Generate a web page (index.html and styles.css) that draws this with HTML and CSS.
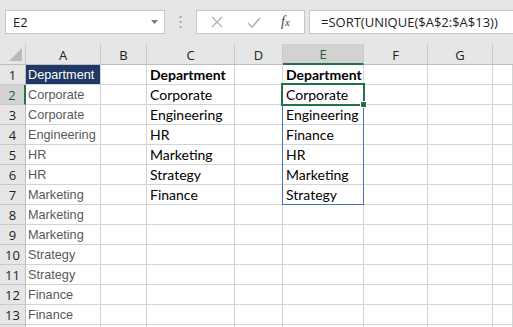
FILE: index.html
```html
<!DOCTYPE html>
<html>
<head>
<meta charset="utf-8">
<link rel="stylesheet" href="styles.css">
</head>
<body>
<div class="app">
  <div class="fbar">
    <div class="namebox">
      <span class="ref">E2</span>
      <svg class="dd" width="7" height="4" viewBox="0 0 7 4"><path d="M0 0H7L3.5 4Z" fill="#7a7a7a"/></svg>
    </div>
    <div class="grip">
      <svg width="3" height="13" viewBox="0 0 3 13"><rect x="0.5" y="0" width="2" height="2" fill="#a8a8a8"/><rect x="0.5" y="5" width="2" height="2" fill="#a8a8a8"/><rect x="0.5" y="10" width="2" height="2" fill="#a8a8a8"/></svg>
    </div>
    <div class="btns">
      <svg class="ic" width="12" height="12" viewBox="0 0 12 12"><path d="M1 1L11 11M11 1L1 11" stroke="#b3b3b3" stroke-width="1.4" fill="none"/></svg>
      <svg class="ic" width="14" height="11" viewBox="0 0 14 11"><path d="M1 6L5 10L13 1" stroke="#b3b3b3" stroke-width="1.6" fill="none"/></svg>
      <span class="fx">f<i>x</i></span>
    </div>
    <div class="formula">=SORT(UNIQUE($A$2:$A$13))</div>
  </div>
  <div class="sheet">
    <div class="grid">
      <div class="ch corner"><svg width="13" height="13" viewBox="0 0 13 13"><path d="M13 0V13H0Z" fill="#b9b9b9"/></svg></div>
      <div class="ch">A</div><div class="ch">B</div><div class="ch">C</div><div class="ch">D</div><div class="ch sel">E</div><div class="ch">F</div><div class="ch">G</div><div class="ch last"></div>

      <div class="rh">1</div><div class="c a hd">Department</div><div class="c"></div><div class="c k b">Department</div><div class="c"></div><div class="c k b">Department</div><div class="c"></div><div class="c"></div><div class="c"></div>
      <div class="rh rsel">2</div><div class="c a">Corporate</div><div class="c"></div><div class="c k">Corporate</div><div class="c"></div><div class="c k">Corporate</div><div class="c"></div><div class="c"></div><div class="c"></div>
      <div class="rh">3</div><div class="c a">Corporate</div><div class="c"></div><div class="c k">Engineering</div><div class="c"></div><div class="c k">Engineering</div><div class="c"></div><div class="c"></div><div class="c"></div>
      <div class="rh">4</div><div class="c a">Engineering</div><div class="c"></div><div class="c k">HR</div><div class="c"></div><div class="c k">Finance</div><div class="c"></div><div class="c"></div><div class="c"></div>
      <div class="rh">5</div><div class="c a">HR</div><div class="c"></div><div class="c k">Marketing</div><div class="c"></div><div class="c k">HR</div><div class="c"></div><div class="c"></div><div class="c"></div>
      <div class="rh">6</div><div class="c a">HR</div><div class="c"></div><div class="c k">Strategy</div><div class="c"></div><div class="c k">Marketing</div><div class="c"></div><div class="c"></div><div class="c"></div>
      <div class="rh">7</div><div class="c a">Marketing</div><div class="c"></div><div class="c k">Finance</div><div class="c"></div><div class="c k">Strategy</div><div class="c"></div><div class="c"></div><div class="c"></div>
      <div class="rh">8</div><div class="c a">Marketing</div><div class="c"></div><div class="c"></div><div class="c"></div><div class="c"></div><div class="c"></div><div class="c"></div><div class="c"></div>
      <div class="rh">9</div><div class="c a">Marketing</div><div class="c"></div><div class="c"></div><div class="c"></div><div class="c"></div><div class="c"></div><div class="c"></div><div class="c"></div>
      <div class="rh">10</div><div class="c a">Strategy</div><div class="c"></div><div class="c"></div><div class="c"></div><div class="c"></div><div class="c"></div><div class="c"></div><div class="c"></div>
      <div class="rh">11</div><div class="c a">Strategy</div><div class="c"></div><div class="c"></div><div class="c"></div><div class="c"></div><div class="c"></div><div class="c"></div><div class="c"></div>
      <div class="rh">12</div><div class="c a">Finance</div><div class="c"></div><div class="c"></div><div class="c"></div><div class="c"></div><div class="c"></div><div class="c"></div><div class="c"></div>
      <div class="rh">13</div><div class="c a">Finance</div><div class="c"></div><div class="c"></div><div class="c"></div><div class="c"></div><div class="c"></div><div class="c"></div><div class="c"></div>
      <div class="rh"></div><div class="c"></div><div class="c"></div><div class="c"></div><div class="c"></div><div class="c"></div><div class="c"></div><div class="c"></div><div class="c"></div>
    </div>
    <div class="spill"></div>
    <div class="active"><span class="handle"></span></div>
  </div>
</div>
</body>
</html>
```
FILE: styles.css
```css
html, body {
  margin: 0;
  padding: 0;
  background: #ffffff;
}
.app {
  width: 513px;
  height: 327px;
  overflow: hidden;
  background: #e6e6e6;
  font-family: "Open Sans", "Noto Sans", sans-serif;
}
.fbar {
  height: 44px;
  box-sizing: border-box;
  padding-top: 10px;
  display: flex;
  align-items: flex-start;
  background: #e6e6e6;
}
.namebox {
  margin-left: 5px;
  width: 160px;
  height: 24px;
  box-sizing: border-box;
  border: 1px solid #c6c6c6;
  background: #ffffff;
  display: flex;
  align-items: center;
  justify-content: space-between;
  padding: 0 6px 0 7px;
  font-size: 13px;
  color: #222;
}
.grip {
  width: 31px;
  height: 24px;
  display: flex;
  align-items: center;
  justify-content: center;
}
.btns {
  width: 109px;
  height: 24px;
  box-sizing: border-box;
  border: 1px solid #c6c6c6;
  background: #ffffff;
  display: flex;
  align-items: center;
  padding-left: 14px;
  gap: 24px;
}
.fx {
  font-family: "Liberation Serif", "DejaVu Serif", serif;
  font-style: italic;
  font-size: 14px;
  color: #444;
  margin-left: -4px;
}
.fx i {
  font-size: 11px;
}
.formula {
  flex: 1;
  margin-left: 4px;
  height: 24px;
  box-sizing: border-box;
  border: 1px solid #c6c6c6;
  border-right: none;
  background: #ffffff;
  font-size: 13px;
  color: #222;
  padding-left: 11px;
  line-height: 22px;
  white-space: nowrap;
}
.sheet {
  position: relative;
  background: #ffffff;
}
.grid {
  display: grid;
  grid-template-columns: 26px 75px 46px 88px 48px 81px 64px 65px 1fr;
  grid-template-rows: 21px;
  grid-auto-rows: 20px;
}
.ch {
  background: #e6e6e6;
  box-sizing: border-box;
  border-bottom: 1px solid #bdbdbd;
  border-right: 1px solid #c9c9c9;
  display: flex;
  align-items: center;
  justify-content: center;
  font-size: 13px;
  color: #222;
  padding-top: 1px;
}
.ch.corner {
  justify-content: flex-end;
  align-items: flex-end;
  padding: 0 3px 3px 0;
}
.ch.last {
  border-right: none;
}
.ch.sel {
  background: #d2d2d2;
  border-bottom: 2px solid #217346;
  color: #1d5b3a;
}
.rh {
  background: #e6e6e6;
  box-sizing: border-box;
  border-bottom: 1px solid #c9c9c9;
  border-right: 1px solid #bdbdbd;
  display: flex;
  align-items: center;
  justify-content: center;
  font-size: 13px;
  color: #222;
}
.rh.rsel {
  background: #d2d2d2;
  border-right: 2px solid #217346;
  color: #1d5b3a;
}
.c {
  box-sizing: border-box;
  border-right: 1px solid #d4d4d4;
  border-bottom: 1px solid #d4d4d4;
  display: flex;
  align-items: flex-end;
  padding: 0 0 2px 2px;
  white-space: nowrap;
  overflow: visible;
}
.c.a {
  font-family: "Liberation Sans", Arial, sans-serif;
  font-size: 12.7px;
  color: #595959;
}
.c.a.hd {
  background: #203864;
  color: #ffffff;
}
.c.k {
  font-family: Lato, "Open Sans", sans-serif;
  font-size: 14px;
  color: #000;
  padding-left: 3px;
  padding-bottom: 1px;
}
.c.b {
  font-weight: bold;
}
.spill {
  position: absolute;
  left: 282px;
  top: 40px;
  width: 82px;
  height: 121px;
  box-sizing: border-box;
  border: 1px solid #4472c4;
}
.active {
  position: absolute;
  left: 281px;
  top: 39px;
  width: 84px;
  height: 23px;
  box-sizing: border-box;
  border: 2px solid #217346;
}
.handle {
  position: absolute;
  right: -4px;
  bottom: -4px;
  width: 5px;
  height: 5px;
  background: #217346;
  border: 1px solid #ffffff;
}
```
